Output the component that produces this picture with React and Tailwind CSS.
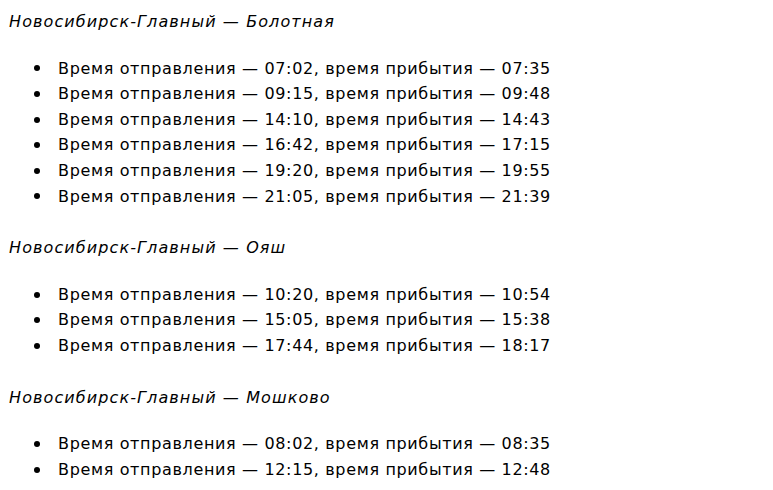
import React from 'react';

const routes = [
  {
    title: 'Новосибирск-Главный — Болотная',
    trains: [
      ['07:02', '07:35'],
      ['09:15', '09:48'],
      ['14:10', '14:43'],
      ['16:42', '17:15'],
      ['19:20', '19:55'],
      ['21:05', '21:39'],
    ],
  },
  {
    title: 'Новосибирск-Главный — Ояш',
    trains: [
      ['10:20', '10:54'],
      ['15:05', '15:38'],
      ['17:44', '18:17'],
    ],
  },
  {
    title: 'Новосибирск-Главный — Мошково',
    trains: [
      ['08:02', '08:35'],
      ['12:15', '12:48'],
    ],
  },
];

export default function App() {
  return (
    <div className="w-[773px] h-[490px] overflow-hidden bg-white pl-[9px] pt-[9px] font-['DejaVu_Sans',sans-serif] text-[16px] leading-[25.6px] text-black">
      {routes.map((route) => (
        <div key={route.title}>
          <p className="mb-[21px] italic tracking-[1.1px]">{route.title}</p>
          <ul className="mb-[26px] tracking-[0.65px]">
            {route.trains.map(([dep, arr]) => (
              <li key={dep} className="flex items-center pl-[25px]">
                <span className="mr-[18px] h-[6px] w-[6px] shrink-0 rounded-full bg-black" />
                <span>Время отправления — {dep}, время прибытия — {arr}</span>
              </li>
            ))}
          </ul>
        </div>
      ))}
    </div>
  );
}
